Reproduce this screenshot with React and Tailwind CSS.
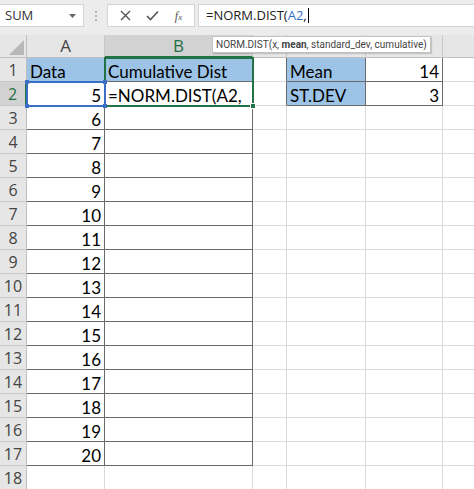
import React from 'react';

const cols = [
  { key: 'A', w: 'w-[78px]' },
  { key: 'B', w: 'w-[148px]' },
  { key: 'C', w: 'w-[34px]' },
  { key: 'D', w: 'w-[79px]' },
  { key: 'E', w: 'w-[77px]' },
  { key: 'F', w: 'w-[79px]', hidden: true },
];

const cells = {
  A1: { v: 'Data', fill: true },
  B1: { v: 'Cumulative Dist', fill: true },
  B2: { v: '=NORM.DIST(A2,' },
  D1: { v: 'Mean', fill: true },
  E1: { v: '14', num: true },
  D2: { v: 'ST.DEV', fill: true },
  E2: { v: '3', num: true },
};
for (let r = 2; r <= 17; r++) cells['A' + r] = { v: String(r + 3), num: true };

const inTable = (c, r) =>
  ((c === 'A' || c === 'B') && r <= 17) || ((c === 'D' || c === 'E') && r <= 2);

function Cell({ col, row }) {
  const id = col.key + row;
  const cell = cells[id];
  const boxed = inTable(col.key, row);
  const darkRight = boxed || (col.key === 'C' && row <= 2);
  return (
    <div
      className={`${col.w} h-[24px] shrink-0 flex items-center border-b border-r overflow-visible whitespace-nowrap ${
        boxed ? 'border-b-[#6a6a6a]' : 'border-b-[#dadada]'
      } ${darkRight ? 'border-r-[#6a6a6a]' : 'border-r-[#dadada]'} ${
        cell && cell.fill ? 'bg-[#9dc3e6]' : 'bg-white'
      } ${cell && cell.num ? 'justify-end pr-[3px]' : 'pl-[3px]'}`}
    >
      {cell && (
        <span className="text-[17px] leading-none text-black font-['Lato','Liberation_Sans',sans-serif] pt-[3px]">
          {cell.v}
        </span>
      )}
    </div>
  );
}

export default function App() {
  const rows = Array.from({ length: 18 }, (_, i) => i + 1);
  return (
    <div className="relative w-[474px] h-[489px] overflow-hidden bg-white font-['Open_Sans','Noto_Sans',sans-serif]">
      {/* formula bar */}
      <div className="h-[35px] bg-[#ececec] flex items-start pt-[4px]">
        <div className="w-[84px] h-[23px] bg-white border border-[#d4d4d4] border-l-0 flex items-center justify-between pl-[5px] pr-[7px]">
          <span className="text-[13px] text-[#333]">SUM</span>
          <svg width="7" height="4" viewBox="0 0 7 4"><path d="M0 0h7L3.5 4z" fill="#666" /></svg>
        </div>
        <div className="w-[23px] h-[23px] flex flex-col items-center justify-center gap-[2px]">
          <span className="w-[2px] h-[2px] bg-[#b5b5b5]" />
          <span className="w-[2px] h-[2px] bg-[#b5b5b5]" />
          <span className="w-[2px] h-[2px] bg-[#b5b5b5]" />
        </div>
        <div className="w-[88px] h-[23px] bg-white border border-[#d4d4d4] flex items-center justify-around px-[4px]">
          <svg width="11" height="11" viewBox="0 0 11 11"><path d="M1 1l9 9M10 1l-9 9" stroke="#555" strokeWidth="1.4" /></svg>
          <svg width="13" height="11" viewBox="0 0 13 11"><path d="M1 6l3.5 3.5L12 1.5" stroke="#555" strokeWidth="1.6" fill="none" /></svg>
          <span className="text-[12px] italic text-[#555] font-['Liberation_Serif',serif]">f<span className="text-[9px]">x</span></span>
        </div>
        <div className="ml-[3px] flex-1 h-[23px] bg-white border border-[#d4d4d4] border-r-0 flex items-center pl-[7px]">
          <span className="text-[13px] text-[#222]">=NORM.DIST(<span className="text-[#2f6fc6]">A2</span>,</span>
          <span className="w-px h-[15px] bg-black ml-[1px]" />
        </div>
      </div>

      {/* column headers */}
      <div className="flex h-[23px]">
        <div className="w-[27px] shrink-0 bg-[#e6e6e6] border-r border-b border-[#bfbfbf] flex items-end justify-end p-[2px]">
          <svg width="15" height="15" viewBox="0 0 15 15"><path d="M15 0V15H0z" fill="#b8b8b8" /></svg>
        </div>
        {cols.map((c) => (
          <div
            key={c.key}
            className={`${c.w} shrink-0 flex items-center justify-center border-r border-[#c8c8c8] text-[17px] ${
              c.key === 'B'
                ? 'bg-[#d2d2d2] text-[#1e7145] border-b-2 border-b-[#217346]'
                : 'bg-[#e6e6e6] text-[#444] border-b border-b-[#bfbfbf]'
            }`}
          >
            {c.hidden ? '' : c.key}
          </div>
        ))}
      </div>

      {/* rows */}
      {rows.map((r) => (
        <div key={r} className="flex h-[24px]">
          <div
            className={`w-[27px] shrink-0 flex items-center justify-center text-[16px] border-b ${
              r === 2
                ? 'bg-[#d2d2d2] text-[#1e7145] border-r-2 border-r-[#217346] border-b-[#c8c8c8]'
                : 'bg-[#e6e6e6] text-[#444] border-r border-r-[#bfbfbf] border-b-[#c8c8c8]'
            }`}
          >
            {r}
          </div>
          {cols.map((c) => (
            <Cell key={c.key} col={c} row={r} />
          ))}
        </div>
      ))}

      {/* active selection B1:B2 */}
      <div className="absolute left-[104px] top-[57px] w-[150px] h-[50px] border-2 border-[#217346] pointer-events-none">
        <span className="absolute -right-[4px] -bottom-[4px] w-[6px] h-[6px] bg-[#217346] border border-white" />
      </div>

      {/* formula reference A2 */}
      <div className="absolute left-[26px] top-[81px] w-[80px] h-[26px] border-2 border-[#3a6fc4] pointer-events-none">
        <span className="absolute -left-[3px] -top-[3px] w-[4px] h-[4px] bg-[#3a6fc4]" />
        <span className="absolute -right-[3px] -top-[3px] w-[4px] h-[4px] bg-[#3a6fc4]" />
        <span className="absolute -left-[3px] -bottom-[3px] w-[4px] h-[4px] bg-[#3a6fc4]" />
        <span className="absolute -right-[3px] -bottom-[3px] w-[4px] h-[4px] bg-[#3a6fc4]" />
      </div>

      {/* function tooltip */}
      <div className="absolute left-[212px] top-[36px] h-[17px] px-[3px] bg-white border border-[#c2c2c2] flex items-center whitespace-nowrap text-[10px] font-['Roboto',sans-serif] text-[#444] shadow-[1px_1px_1px_rgba(0,0,0,0.15)]">
        <span>NORM.DIST(x,&nbsp;</span>
        <span className="font-bold">mean</span>
        <span>, standard_dev, cumulative)</span>
      </div>
    </div>
  );
}
